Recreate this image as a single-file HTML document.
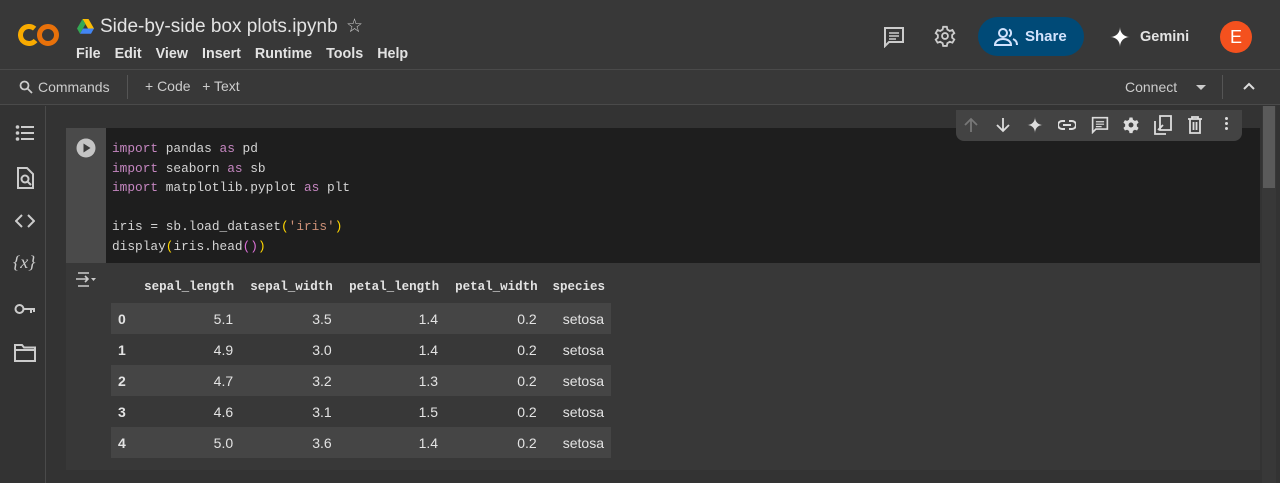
<!DOCTYPE html>
<html><head><style>
*{margin:0;padding:0;box-sizing:border-box}
body{width:1280px;height:483px;background:#333;font-family:"Liberation Sans",sans-serif;color:#e3e3e3;position:relative;overflow:hidden}
.abs{position:absolute}
.menu span{margin-right:14px}
.code{font-family:"Liberation Mono",monospace;font-size:12.8px;line-height:19.5px;color:#d4d4d4;white-space:pre}
.kw{color:#c586c0}.str{color:#ce9178}.par{color:#ffd700}.par2{color:#da70d6}
table{border-collapse:collapse;font-size:14px}
th{font-family:"Liberation Mono",monospace;font-weight:bold;font-size:12.5px;text-align:right;padding:0 6px;height:32px;color:#e3e3e3}
td{text-align:right;height:31px;padding:0 7px}
tbody tr:nth-child(odd){background:#454545}
tbody tr:nth-child(even){background:#383838}
td:first-child{text-align:left;font-weight:bold}
</style></head><body>
<div class="abs" style="left:0;top:0;width:1280px;height:70px;background:#383838;border-bottom:1px solid #4a4a4a"></div>
<div class="abs" style="left:0;top:70px;width:1280px;height:35px;background:#383838;border-bottom:1px solid #4a4a4a"></div>
<svg class="abs" style="left:18px;top:22px" width="42" height="26" viewBox="0 0 42 26"><circle cx="11" cy="13" r="8.5" fill="none" stroke="#f9ab00" stroke-width="5" stroke-dasharray="40 14" transform="rotate(40 11 13)"/><circle cx="30" cy="13" r="8.5" fill="none" stroke="#e8710a" stroke-width="5"/></svg>
<svg class="abs" style="left:77px;top:19px" width="17" height="15" viewBox="0 0 17 15"><path d="M5.5 0h6l5.5 9.5h-6z" fill="#fbbc04"/><path d="M5.5 0L0 9.5l3 5.2L8.5 5z" fill="#34a853"/><path d="M3 14.7h11l3-5.2H6z" fill="#4285f4"/></svg>
<div class="abs" style="left:100px;top:16px;font-size:19px;color:#e3e3e3">Side-by-side box plots.ipynb</div>
<div class="abs" style="left:346px;top:15px;font-size:19px;color:#ccc">☆</div>
<div class="abs menu" style="left:76px;top:46px;font-size:14.3px;font-weight:bold;color:#e3e3e3"><span>File</span><span>Edit</span><span>View</span><span>Insert</span><span>Runtime</span><span>Tools</span><span>Help</span></div>
<svg class="abs" style="left:883px;top:26px" width="22" height="22" viewBox="0 0 22 22" fill="none" stroke="#ccc" stroke-width="2"><path d="M2 2h18v14H6l-4 4z"/><path d="M6 7h10M6 10h10M6 13h7" stroke-width="1.5"/></svg>
<svg class="abs" style="left:934px;top:25px" width="22" height="22" viewBox="0 0 24 24" fill="none" stroke="#ccc" stroke-width="2"><circle cx="12" cy="12" r="3.2"/><path d="M10 2h4l.6 3 2.6 1.5 2.9-1 2 3.4-2.3 2v3l2.3 2-2 3.4-2.9-1-2.6 1.5-.6 3h-4l-.6-3-2.6-1.5-2.9 1-2-3.4 2.3-2v-3l-2.3-2 2-3.4 2.9 1L9.4 5z"/></svg>
<div class="abs" style="left:978px;top:17px;width:106px;height:39px;border-radius:20px;background:#004a77"></div>
<svg class="abs" style="left:994px;top:27px" width="24" height="20" viewBox="0 0 24 20" fill="none" stroke="#d3e3fd" stroke-width="2"><circle cx="9" cy="6" r="4"/><path d="M1 18c0-4 4-6 8-6s8 2 8 6z"/><path d="M15 2.5a4 4 0 010 7M19 12c2 .8 4 2.5 4 6"/></svg>
<div class="abs" style="left:1025px;top:28px;font-size:15px;font-weight:bold;color:#d3e3fd">Share</div>
<svg class="abs" style="left:1110px;top:27px" width="20" height="20" viewBox="0 0 20 20"><path d="M10 0C10 6 14 10 20 10 14 10 10 14 10 20 10 14 6 10 0 10 6 10 10 6 10 0z" fill="#fff"/></svg>
<div class="abs" style="left:1140px;top:29px;font-size:14.5px;font-weight:bold;color:#e3e3e3">Gemini</div>
<div class="abs" style="left:1220px;top:21px;width:32px;height:32px;border-radius:50%;background:#f4511e;color:#fff;font-size:18px;text-align:center;line-height:32px">E</div>
<svg class="abs" style="left:19px;top:80px" width="14" height="14" viewBox="0 0 14 14" fill="none" stroke="#ccc" stroke-width="1.8"><circle cx="5.5" cy="5.5" r="4"/><path d="M8.5 8.5L13 13"/></svg>
<div class="abs" style="left:38px;top:79px;font-size:14px;color:#ccc">Commands</div>
<div class="abs" style="left:127px;top:75px;width:1px;height:24px;background:#555"></div>
<div class="abs" style="left:145px;top:78px;font-size:14px;color:#ccc">+ Code&nbsp;&nbsp;&nbsp;+ Text</div>
<div class="abs" style="left:1125px;top:79px;font-size:14px;color:#ccc">Connect</div>
<div class="abs" style="left:1196px;top:85px;width:0;height:0;border-left:5px solid transparent;border-right:5px solid transparent;border-top:5px solid #ccc"></div>
<div class="abs" style="left:1222px;top:75px;width:1px;height:24px;background:#555"></div>
<svg class="abs" style="left:1242px;top:81px" width="14" height="10" viewBox="0 0 14 10" fill="none" stroke="#ddd" stroke-width="2"><path d="M2 8l5-5 5 5"/></svg>
<div class="abs" style="left:45px;top:106px;width:1px;height:377px;background:#4a4a4a"></div>
<svg class="abs" style="left:15px;top:123px" width="20" height="20" viewBox="0 0 20 20" fill="#ccc"><circle cx="2.5" cy="4" r="1.8"/><circle cx="2.5" cy="10" r="1.8"/><circle cx="2.5" cy="16" r="1.8"/><rect x="6" y="3" width="13" height="2"/><rect x="6" y="9" width="13" height="2"/><rect x="6" y="15" width="13" height="2"/></svg>
<svg class="abs" style="left:16px;top:167px" width="18" height="22" viewBox="0 0 18 22" fill="none" stroke="#ccc" stroke-width="2"><path d="M2 1h9l6 6v14H2z"/><circle cx="9" cy="12" r="3.5"/><path d="M11.5 14.5L15 18"/></svg>
<svg class="abs" style="left:15px;top:214px" width="20" height="14" viewBox="0 0 20 14" fill="none" stroke="#ccc" stroke-width="2"><path d="M7 1L1 7l6 6M13 1l6 6-6 6"/></svg>
<div class="abs" style="left:13px;top:252px;font-size:18px;color:#ccc;font-family:'Liberation Serif',serif;font-style:italic">{x}</div>
<svg class="abs" style="left:14px;top:302px" width="22" height="14" viewBox="0 0 22 14" fill="none" stroke="#ccc" stroke-width="2"><circle cx="5.5" cy="7" r="4"/><path d="M9.5 7H21M17 7v4M20 7v3"/></svg>
<svg class="abs" style="left:14px;top:344px" width="22" height="18" viewBox="0 0 22 18" fill="none" stroke="#ccc" stroke-width="2"><path d="M1 1h7l2 2.5h11V17H1z"/><path d="M1 6h20"/></svg>
<div class="abs" style="left:66px;top:128px;width:1194px;height:342px;background:#383838"></div>
<div class="abs" style="left:66px;top:128px;width:40px;height:135px;background:#4a4a4a"></div>
<div class="abs" style="left:106px;top:128px;width:1154px;height:135px;background:#1e1e1e"></div>
<svg class="abs" style="left:76px;top:138px" width="20" height="20" viewBox="0 0 20 20"><circle cx="10" cy="10" r="9.5" fill="#c4c4c4"/><path d="M7.5 5.5v9l7-4.5z" fill="#3a3a3a"/></svg>
<div class="abs code" style="left:112px;top:139px"><span class="kw">import</span> pandas <span class="kw">as</span> pd
<span class="kw">import</span> seaborn <span class="kw">as</span> sb
<span class="kw">import</span> matplotlib.pyplot <span class="kw">as</span> plt

iris = sb.load_dataset<span class="par">(</span><span class="str">'iris'</span><span class="par">)</span>
display<span class="par">(</span>iris.head<span class="par2">()</span><span class="par">)</span></div>
<div class="abs" style="left:956px;top:110px;width:286px;height:31px;background:#434343;border-radius:0 0 8px 8px"></div>
<svg class="abs" style="left:963px;top:117px" width="16" height="16" viewBox="0 0 16 16" fill="none" stroke="#777" stroke-width="1.8"><path d="M8 15V2M2 8l6-6 6 6"/></svg>
<svg class="abs" style="left:995px;top:117px" width="16" height="16" viewBox="0 0 16 16" fill="none" stroke="#ddd" stroke-width="1.8"><path d="M8 1v13M2 8l6 6 6-6"/></svg>
<svg class="abs" style="left:1027px;top:117px" width="16" height="16" viewBox="0 0 20 20"><path d="M10 0C10 6 14 10 20 10 14 10 10 14 10 20 10 14 6 10 0 10 6 10 10 6 10 0z" fill="#ddd"/></svg>
<svg class="abs" style="left:1058px;top:119px" width="18" height="12" viewBox="0 0 18 12" fill="none" stroke="#ddd" stroke-width="2"><path d="M7 2H4a4 4 0 000 8h3M11 2h3a4 4 0 010 8h-3M5 6h8"/></svg>
<svg class="abs" style="left:1091px;top:116px" width="18" height="18" viewBox="0 0 22 22" fill="none" stroke="#ddd" stroke-width="2"><path d="M2 2h18v14H6l-4 4z"/><path d="M6 7h10M6 10h10M6 13h7" stroke-width="1.5"/></svg>
<svg class="abs" style="left:1122px;top:116px" width="18" height="18" viewBox="0 0 24 24"><path d="M10 2h4l.6 3 2.6 1.5 2.9-1 2 3.4-2.3 2v3l2.3 2-2 3.4-2.9-1-2.6 1.5-.6 3h-4l-.6-3-2.6-1.5-2.9 1-2-3.4 2.3-2v-3l-2.3-2 2-3.4 2.9 1L9.4 5z" fill="#ddd"/><circle cx="12" cy="12" r="3.3" fill="#434343"/></svg>
<svg class="abs" style="left:1154px;top:115px" width="18" height="20" viewBox="0 0 18 20" fill="none" stroke="#ddd" stroke-width="1.8"><path d="M6 1h11v14H6zM1 6v13h11"/><path d="M4 15l5-5"/></svg>
<svg class="abs" style="left:1187px;top:116px" width="16" height="18" viewBox="0 0 16 18" fill="none" stroke="#ddd" stroke-width="1.8"><path d="M1 3h14M5 3V1h6v2M3 3v14h10V3M6.5 6v8M9.5 6v8"/></svg>
<div class="abs" style="left:1225px;top:117px;width:3px;height:3px;background:#ddd;border-radius:50%;box-shadow:0 5px 0 #ddd,0 10px 0 #ddd"></div>
<svg class="abs" style="left:75px;top:271px" width="22" height="18" viewBox="0 0 22 18" fill="none" stroke="#ccc" stroke-width="1.6"><path d="M3 2h11M1 8h12M10 5l3 3-3 3M3 15h11"/><path d="M16 7h5l-2.5 3z" fill="#ccc" stroke="none"/></svg>
<table class="abs" style="left:111px;top:271px;width:500px">
<thead><tr><th></th><th>sepal_length</th><th>sepal_width</th><th>petal_length</th><th>petal_width</th><th>species</th></tr></thead>
<tbody>
<tr><td>0</td><td>5.1</td><td>3.5</td><td>1.4</td><td>0.2</td><td>setosa</td></tr>
<tr><td>1</td><td>4.9</td><td>3.0</td><td>1.4</td><td>0.2</td><td>setosa</td></tr>
<tr><td>2</td><td>4.7</td><td>3.2</td><td>1.3</td><td>0.2</td><td>setosa</td></tr>
<tr><td>3</td><td>4.6</td><td>3.1</td><td>1.5</td><td>0.2</td><td>setosa</td></tr>
<tr><td>4</td><td>5.0</td><td>3.6</td><td>1.4</td><td>0.2</td><td>setosa</td></tr>
</tbody></table>
<div class="abs" style="left:1262px;top:106px;width:14px;height:377px;background:#383838"></div>
<div class="abs" style="left:1263px;top:106px;width:12px;height:82px;background:#5a5a5a"></div>
</body></html>
